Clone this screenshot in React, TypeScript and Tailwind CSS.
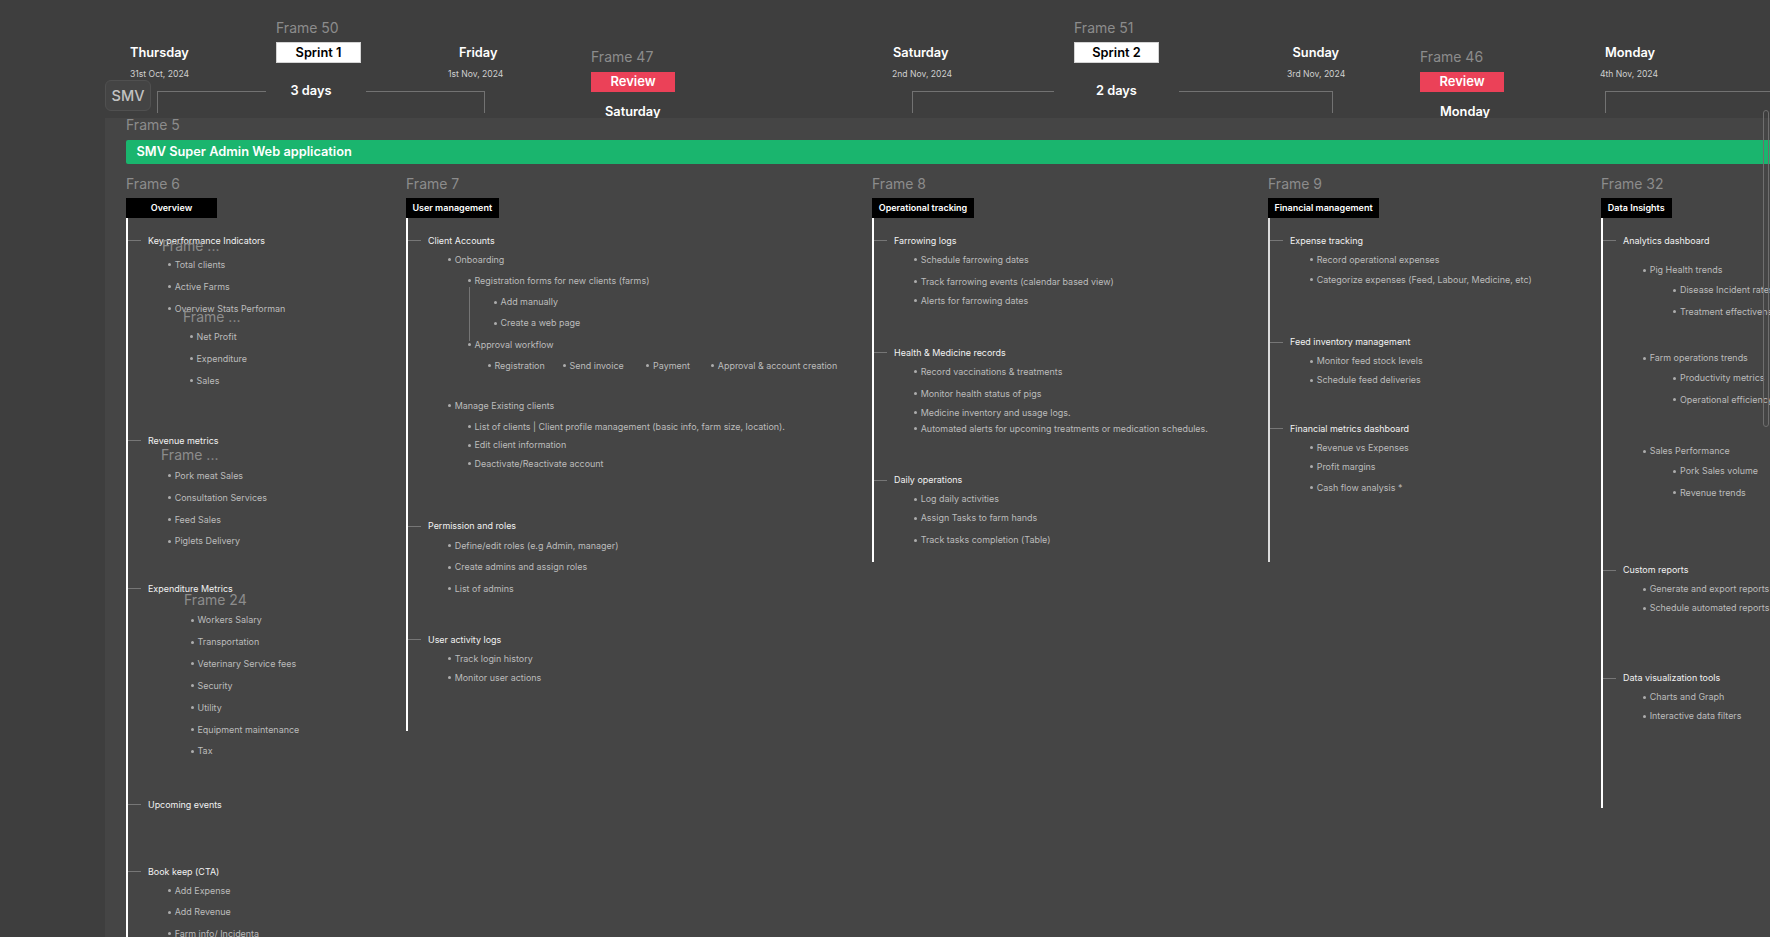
import type { ReactNode } from "react";

const L1 = "pl-[39.7px]";
const L2 = "pl-[61.5px]";
const L2B = "pl-[62.5px]";
const U2 = "pl-[59.5px]";
const U3 = "pl-[85.5px]";
const D2 = "pl-[70px]";

function Head({ mt = "", children }: { mt?: string; children: ReactNode }) {
  return (
    <div className={`flex h-3 items-center whitespace-nowrap text-[8.95px] leading-3 text-[#f2f2f2] ${mt}`}>
      <span className="mr-[7px] h-px w-[13px] bg-[#767676]" />
      {children}
    </div>
  );
}

function Dot({ children }: { children: ReactNode }) {
  return (
    <>
      <span className="mr-1 h-[3px] w-[3px] shrink-0 rounded-full bg-[#adadad]" />
      {children}
    </>
  );
}

function Li({ pad, mt = "", children }: { pad: string; mt?: string; children: ReactNode }) {
  return (
    <div className={`flex h-3 items-center whitespace-nowrap text-[8.95px] leading-3 text-[#bcbcbc] ${pad} ${mt}`}>
      <Dot>{children}</Dot>
    </div>
  );
}

function Group({ className, children }: { className: string; children: ReactNode }) {
  return <div className={`flex flex-col ${className}`}>{children}</div>;
}

function FrameLabel({ children, className = "" }: { children: ReactNode; className?: string }) {
  return <div className={`h-[14px] whitespace-nowrap text-[14px] leading-[14px] text-[#8c8c8c] ${className}`}>{children}</div>;
}

function Column({
  frame,
  title,
  width,
  boxWidth,
  bodyHeight,
  lineColor = "border-white",
  children,
}: {
  frame: string;
  title: string;
  width: string;
  boxWidth: string;
  bodyHeight: string;
  lineColor?: string;
  children: ReactNode;
}) {
  return (
    <div className={`shrink-0 ${width}`}>
      <FrameLabel>{frame}</FrameLabel>
      <div className={`mt-[7px] flex h-5 items-center justify-center bg-black text-[9px] font-semibold text-white ${boxWidth}`}>{title}</div>
      <div className={`flow-root border-l-2 ${lineColor} ${bodyHeight}`}>{children}</div>
    </div>
  );
}

function Connector({ className }: { className: string }) {
  return <div className={`absolute top-[91px] h-[22px] border-t border-[#727272] ${className}`} />;
}

const strong = "h-4 whitespace-nowrap text-[12.8px] font-semibold leading-4 text-white";

function DayStack({ width, dayPad = "", day, date }: { width: string; dayPad?: string; day: string; date: string }) {
  return (
    <div className={`shrink-0 pt-[45px] ${width}`}>
      <div className={`${strong} ${dayPad}`}>{day}</div>
      <div className="mt-[6.5px] h-3 whitespace-nowrap text-[8.6px] leading-3 text-[#d0d0d0]">{date}</div>
    </div>
  );
}

function SprintStack({ width, frame, name, days, daysPad }: { width: string; frame: string; name: string; days: string; daysPad: string }) {
  return (
    <div className={`shrink-0 pt-[21px] ${width}`}>
      <FrameLabel>{frame}</FrameLabel>
      <div className="mt-[7px] flex h-[21px] w-[85px] items-center justify-center border border-[#d4d4d4] bg-white text-[12.8px] font-semibold text-black">
        {name}
      </div>
      <div className={`mt-[19.5px] ${strong} ${daysPad}`}>{days}</div>
    </div>
  );
}

function ReviewStack({ width, frame, day, dayPad }: { width: string; frame: string; day: string; dayPad: string }) {
  return (
    <div className={`shrink-0 pt-[50px] ${width}`}>
      <FrameLabel>{frame}</FrameLabel>
      <div className="mt-2 flex h-5 w-[84px] items-center justify-center bg-[#eb4158] text-[13px] font-semibold text-white">Review</div>
      <div className={`mt-[11.5px] ${strong} ${dayPad}`}>{day}</div>
    </div>
  );
}

export default function App() {
  return (
    <div className="relative h-[937px] w-[1770px] overflow-hidden bg-[#3e3e3e] font-['Inter',sans-serif]">
      {/* timeline header */}
      <div className="flex h-[118px] pl-[130px]">
        <DayStack width="w-[146px]" day="Thursday" date="31st Oct, 2024" />
        <SprintStack width="w-[172px]" frame="Frame 50" name="Sprint 1" days="3 days" daysPad="pl-[14.5px]" />
        <DayStack width="w-[143px]" dayPad="pl-[11px]" day="Friday" date="1st Nov, 2024" />
        <ReviewStack width="w-[301px]" frame="Frame 47" day="Saturday" dayPad="pl-[14px]" />
        <DayStack width="w-[182px]" dayPad="pl-px" day="Saturday" date="2nd Nov, 2024" />
        <SprintStack width="w-[213px]" frame="Frame 51" name="Sprint 2" days="2 days" daysPad="pl-[22px]" />
        <DayStack width="w-[133px]" dayPad="pl-[5.5px]" day="Sunday" date="3rd Nov, 2024" />
        <ReviewStack width="w-[180px]" frame="Frame 46" day="Monday" dayPad="pl-5" />
        <DayStack width="w-[170px]" dayPad="pl-[5px]" day="Monday" date="4th Nov, 2024" />
      </div>

      {/* connectors between the days */}
      <Connector className="left-[157px] w-[109px] border-l" />
      <Connector className="left-[366px] w-[119px] border-r" />
      <Connector className="left-[912px] w-[142px] border-l" />
      <Connector className="left-[1179px] w-[154px] border-r" />
      <Connector className="left-[1605px] w-[165px] border-l" />

      <div className="absolute left-[105px] top-[80px] flex h-[31px] w-[46px] items-center justify-center rounded-[6px] border border-[#505050] bg-[#444444] text-[14.5px] font-medium text-[#c2c2c2]">
        SMV
      </div>

      {/* Frame 5, main board */}
      <div className="relative ml-[105px] h-[819px] overflow-hidden bg-[#454545] pl-[21px]">
        <FrameLabel>Frame 5</FrameLabel>
        <div className="mt-2 flex h-[24px] items-center rounded-l-[2px] bg-[#1ab56e] pl-[10.5px] text-[12.8px] font-semibold text-white">
          SMV Super Admin Web application
        </div>

        <div className="mt-[13px] flex">
          <Column frame="Frame 6" title="Overview" width="w-[280px]" boxWidth="w-[91px]" bodyHeight="h-[730px]">
            <Head mt="mt-[16.7px]">Key performance Indicators</Head>
            <Group className="mt-[12.3px] gap-[9.9px]">
              <Li pad={L1}>Total clients</Li>
              <Li pad={L1}>Active Farms</Li>
              <Li pad={L1}>Overview Stats Performan</Li>
            </Group>
            <Group className="mt-4 gap-[10px]">
              <Li pad={L2}>Net Profit</Li>
              <Li pad={L2}>Expenditure</Li>
              <Li pad={L2}>Sales</Li>
            </Group>
            <Head mt="mt-[48px]">Revenue metrics</Head>
            <Group className="mt-[23px] gap-[9.9px]">
              <Li pad={L1}>Pork meat Sales</Li>
              <Li pad={L1}>Consultation Services</Li>
              <Li pad={L1}>Feed Sales</Li>
              <Li pad={L1}>Piglets Delivery</Li>
            </Group>
            <Head mt="mt-[35.4px]">Expenditure Metrics</Head>
            <Group className="mt-[19.3px] gap-[9.9px]">
              <Li pad={L2B}>Workers Salary</Li>
              <Li pad={L2B}>Transportation</Li>
              <Li pad={L2B}>Veterinary Service fees</Li>
              <Li pad={L2B}>Security</Li>
              <Li pad={L2B}>Utility</Li>
              <Li pad={L2B}>Equipment maintenance</Li>
              <Li pad={L2B}>Tax</Li>
            </Group>
            <Head mt="mt-[41.4px]">Upcoming events</Head>
            <Head mt="mt-[55px]">Book keep (CTA)</Head>
            <Group className="mt-[7px] gap-[9.4px]">
              <Li pad={L1}>Add Expense</Li>
              <Li pad={L1}>Add Revenue</Li>
              <Li pad={L1}>Farm info/ Incidenta</Li>
            </Group>
          </Column>

          <Column frame="Frame 7" title="User management" width="w-[466px]" boxWidth="w-[92.5px]" bodyHeight="h-[513px]">
            <Head mt="mt-[16.7px]">Client Accounts</Head>
            <Li pad={L1} mt="mt-[7.3px]">Onboarding</Li>
            <Group className="relative mt-[9px] gap-[9.25px]">
              <span className="absolute left-[60.5px] top-[12px] h-[54px] w-px bg-[#757575]" />
              <Li pad={U2}>Registration forms for new clients (farms)</Li>
              <Li pad={U3}>Add manually</Li>
              <Li pad={U3}>Create a web page</Li>
              <Li pad={U2}>Approval workflow</Li>
              <div className="flex h-3 items-center whitespace-nowrap pl-[79.5px] text-[8.95px] leading-3 text-[#bcbcbc]">
                <span className="flex w-[75px] items-center"><Dot>Registration</Dot></span>
                <span className="flex w-[83.6px] items-center"><Dot>Send invoice</Dot></span>
                <span className="flex w-[64.7px] items-center"><Dot>Payment</Dot></span>
                <span className="flex items-center"><Dot>Approval &amp; account creation</Dot></span>
              </div>
            </Group>
            <Li pad={L1} mt="mt-[27.7px]">Manage Existing clients</Li>
            <Group className="mt-[9px] gap-[6.5px]">
              <Li pad={U2}>List of clients | Client profile management (basic info, farm size, location).</Li>
              <Li pad={U2}>Edit client information</Li>
              <Li pad={U2}>Deactivate/Reactivate account</Li>
            </Group>
            <Head mt="mt-[50.6px]">Permission and roles</Head>
            <Group className="mt-[7.4px] gap-[9.6px]">
              <Li pad={L1}>Define/edit roles (e.g Admin, manager)</Li>
              <Li pad={L1}>Create admins and assign roles</Li>
              <Li pad={L1}>List of admins</Li>
            </Group>
            <Head mt="mt-[38.7px]">User activity logs</Head>
            <Group className="mt-[7px] gap-[7px]">
              <Li pad={L1}>Track login history</Li>
              <Li pad={L1}>Monitor user actions</Li>
            </Group>
          </Column>

          <Column frame="Frame 8" title="Operational tracking" width="w-[396px]" boxWidth="w-[102px]" bodyHeight="h-[344px]">
            <Head mt="mt-[16.7px]">Farrowing logs</Head>
            <Li pad={L1} mt="mt-[7.3px]">Schedule farrowing dates</Li>
            <Li pad={L1} mt="mt-[9.7px]">Track farrowing events (calendar based view)</Li>
            <Li pad={L1} mt="mt-[7.3px]">Alerts for farrowing dates</Li>
            <Head mt="mt-[39.7px]">Health &amp; Medicine records</Head>
            <Li pad={L1} mt="mt-[7px]">Record vaccinations &amp; treatments</Li>
            <Li pad={L1} mt="mt-[10px]">Monitor health status of pigs</Li>
            <Li pad={L1} mt="mt-[7px]">Medicine inventory and usage logs.</Li>
            <Li pad={L1} mt="mt-1">Automated alerts for upcoming treatments or medication schedules.</Li>
            <Head mt="mt-[39.8px]">Daily operations</Head>
            <Li pad={L1} mt="mt-[7px]">Log daily activities</Li>
            <Li pad={L1} mt="mt-[7px]">Assign Tasks to farm hands</Li>
            <Li pad={L1} mt="mt-[10px]">Track tasks completion (Table)</Li>
          </Column>

          <Column frame="Frame 9" title="Financial management" width="w-[333px]" boxWidth="w-[111px]" bodyHeight="h-[344px]" lineColor="border-[#dcdcdc]">
            <Head mt="mt-[16.7px]">Expense tracking</Head>
            <Group className="mt-[7.3px] gap-[7.7px]">
              <Li pad={L1}>Record operational expenses</Li>
              <Li pad={L1}>Categorize expenses (Feed, Labour, Medicine, etc)</Li>
            </Group>
            <Head mt="mt-[50.8px]">Feed inventory management</Head>
            <Group className="mt-[7px] gap-[7px]">
              <Li pad={L1}>Monitor feed stock levels</Li>
              <Li pad={L1}>Schedule feed deliveries</Li>
            </Group>
            <Head mt="mt-[36.4px]">Financial metrics dashboard</Head>
            <Li pad={L1} mt="mt-[7px]">Revenue vs Expenses</Li>
            <Li pad={L1} mt="mt-[7px]">Profit margins</Li>
            <Li pad={L1} mt="mt-[9px]">Cash flow analysis *</Li>
          </Column>

          <Column frame="Frame 32" title="Data Insights" width="w-[300px]" boxWidth="w-[70.5px]" bodyHeight="h-[590px]">
            <Head mt="mt-[16.7px]">Analytics dashboard</Head>
            <Li pad={L1} mt="mt-[17.6px]">Pig Health trends</Li>
            <Group className="mt-2 gap-[9.4px]">
              <Li pad={D2}>Disease Incident rates</Li>
              <Li pad={D2}>Treatment effectiveness</Li>
            </Group>
            <Li pad={L1} mt="mt-[34.5px]">Farm operations trends</Li>
            <Group className="mt-2 gap-[9.7px]">
              <Li pad={D2}>Productivity metrics</Li>
              <Li pad={D2}>Operational efficiency</Li>
            </Group>
            <Li pad={L1} mt="mt-[39.3px]">Sales Performance</Li>
            <Group className="mt-2 gap-[9.7px]">
              <Li pad={D2}>Pork Sales volume</Li>
              <Li pad={D2}>Revenue trends</Li>
            </Group>
            <Head mt="mt-[65.3px]">Custom reports</Head>
            <Group className="mt-[7px] gap-[7px]">
              <Li pad={L1}>Generate and export reports</Li>
              <Li pad={L1}>Schedule automated reports</Li>
            </Group>
            <Head mt="mt-[58px]">Data visualization tools</Head>
            <Group className="mt-[7px] gap-[7px]">
              <Li pad={L1}>Charts and Graph</Li>
              <Li pad={L1}>Interactive data filters</Li>
            </Group>
          </Column>
        </div>
      </div>

      {/* labels of nested frames, these overlap the list text on the board */}
      <FrameLabel className="absolute left-[162px] top-[239px]">Frame ...</FrameLabel>
      <FrameLabel className="absolute left-[183px] top-[310px]">Frame ...</FrameLabel>
      <FrameLabel className="absolute left-[161px] top-[448px]">Frame ...</FrameLabel>
      <FrameLabel className="absolute left-[184px] top-[593px]">Frame 24</FrameLabel>

      {/* scrollbar of the viewer */}
      <div className="absolute left-[1763px] top-[110px] h-[317px] w-[6px] rounded-full border border-[#6e6e6e]" />
    </div>
  );
}
